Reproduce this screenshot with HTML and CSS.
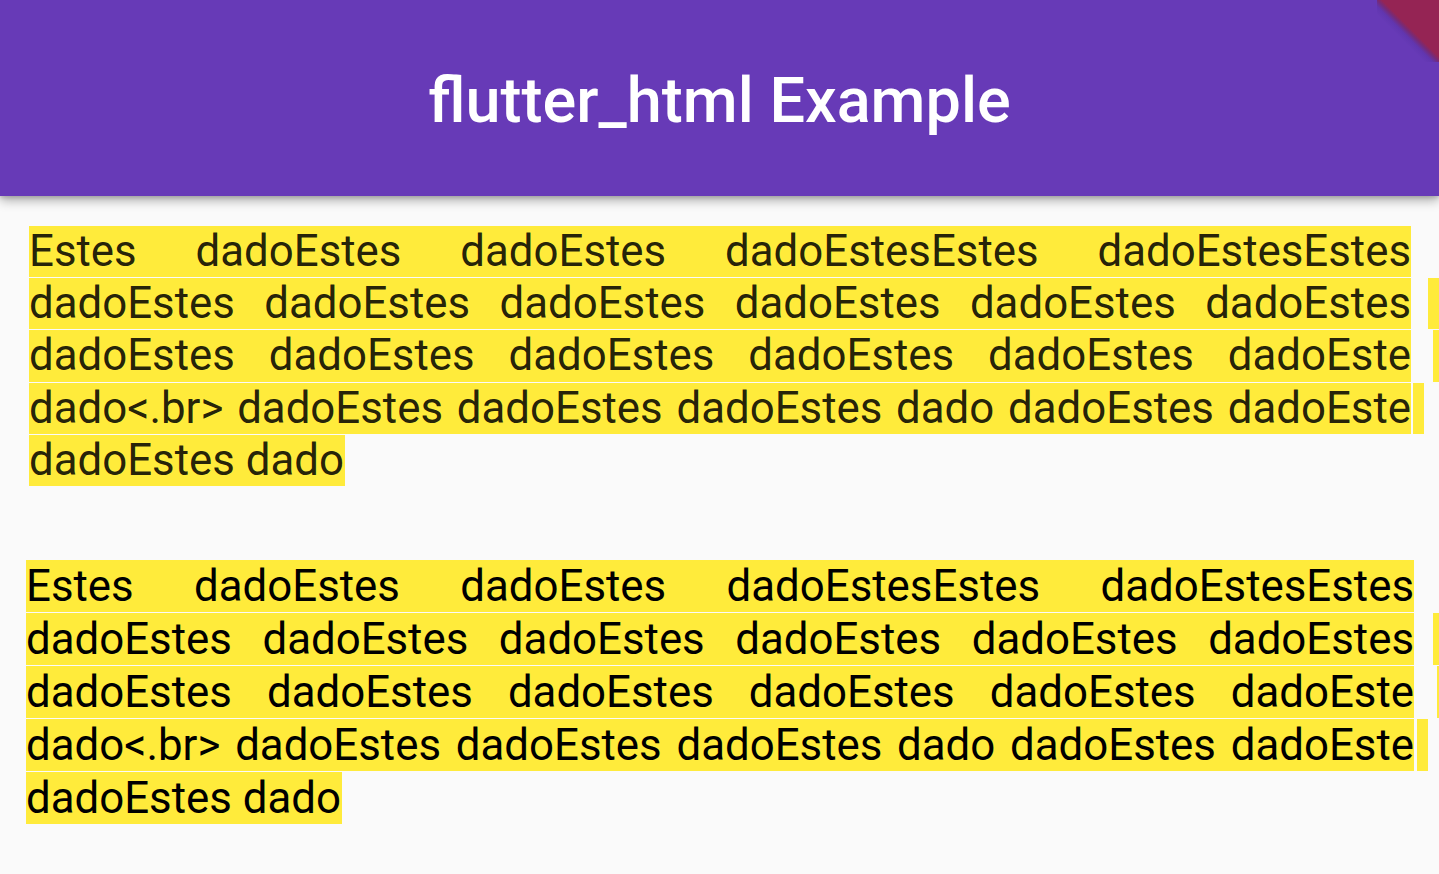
FILE: index.html
```html
<!DOCTYPE html>
<html>
<head>
<meta charset="utf-8">
<link rel="stylesheet" href="styles.css">
</head>
<body>
<div class="app">
  <header class="appbar">
    <h1 class="title">flutter_html Example</h1>
    <div class="debug-banner"></div>
  </header>
  <main class="content">
    <section class="block block-one">
      <div class="row"><div class="line">Estes dadoEstes dadoEstes dadoEstesEstes dadoEstesEstes</div></div>
      <div class="row"><div class="line">dadoEstes dadoEstes dadoEstes dadoEstes dadoEstes dadoEstes</div><span class="sliver s2"></span></div>
      <div class="row"><div class="line">dadoEstes dadoEstes dadoEstes dadoEstes dadoEstes dadoEste</div><span class="sliver s3"></span></div>
      <div class="row"><div class="line">dado&lt;.br&gt; dadoEstes dadoEstes dadoEstes dado dadoEstes dadoEste</div><span class="sliver s4"></span></div>
      <div class="row"><div class="line last">dadoEstes dado</div></div>
    </section>
    <section class="block block-two">
      <div class="row"><div class="line">Estes dadoEstes dadoEstes dadoEstesEstes dadoEstesEstes</div></div>
      <div class="row"><div class="line">dadoEstes dadoEstes dadoEstes dadoEstes dadoEstes dadoEstes</div><span class="sliver s2"></span></div>
      <div class="row"><div class="line">dadoEstes dadoEstes dadoEstes dadoEstes dadoEstes dadoEste</div><span class="sliver s3"></span></div>
      <div class="row"><div class="line">dado&lt;.br&gt; dadoEstes dadoEstes dadoEstes dado dadoEstes dadoEste</div><span class="sliver s4"></span></div>
      <div class="row"><div class="line last">dadoEstes dado</div></div>
    </section>
  </main>
</div>
</body>
</html>
```
FILE: styles.css
```css
* { box-sizing: border-box; }
html, body {
  margin: 0;
  padding: 0;
  background: #fafafa;
  font-family: Roboto, "Liberation Sans", sans-serif;
}
.app {
  width: 1439px;
  height: 874px;
  overflow: hidden;
  position: relative;
  background: #fafafa;
}
.appbar {
  position: relative;
  height: 196px;
  background: #673ab7;
  display: flex;
  align-items: center;
  justify-content: center;
  box-shadow: 0 5px 10px rgba(0, 0, 0, 0.28), 0 2px 4px rgba(0, 0, 0, 0.15);
  z-index: 2;
}
.title {
  margin: 0;
  color: #ffffff;
  font-family: Roboto, sans-serif;
  font-weight: 500;
  font-size: 63px;
  line-height: 1;
  padding-top: 4px;
  letter-spacing: 0;
}
.debug-banner {
  position: absolute;
  top: 0;
  right: 0;
  width: 62px;
  height: 62px;
  background: linear-gradient(225deg,
    #952454 0%,
    #952454 46%,
    rgba(120, 40, 110, 0.85) 50%,
    rgba(85, 45, 160, 0.35) 55%,
    rgba(103, 58, 183, 0) 62%);
}
.content {
  display: flex;
  flex-direction: column;
}
.block {
  display: flex;
  flex-direction: column;
  gap: 1px;
}
.block-one {
  margin-top: 30px;
  padding-left: 29px;
  color: rgba(0, 0, 0, 0.87);
  --row-h: 51.2px;
}
.block-two {
  margin-top: 74px;
  padding-left: 26px;
  color: #000000;
  --row-h: 52px;
}
.row {
  display: flex;
  align-items: stretch;
  height: var(--row-h);
}
.line {
  width: 1382px;
  height: var(--row-h);
  background: #ffeb3b;
  font-size: 43.8px;
  line-height: var(--row-h);
  white-space: nowrap;
  text-align: justify;
  text-align-last: justify;
}
.block-two .line { width: 1388px; }
.line.last,
.block-two .line.last {
  width: auto;
  align-self: flex-start;
  text-align: left;
  text-align-last: left;
  padding-right: 1px;
}
.sliver {
  background: #ffeb3b;
  height: var(--row-h);
}
.block-one .s2 { margin-left: 17px; width: 11px; }
.block-one .s3 { margin-left: 22px; width: 6px; }
.block-one .s4 { margin-left: 2px; width: 11px; }
.block-two .s2 { margin-left: 19px; width: 6px; }
.block-two .s3 { margin-left: 23px; width: 2px; }
.block-two .s4 { margin-left: 3px; width: 11px; }
```
